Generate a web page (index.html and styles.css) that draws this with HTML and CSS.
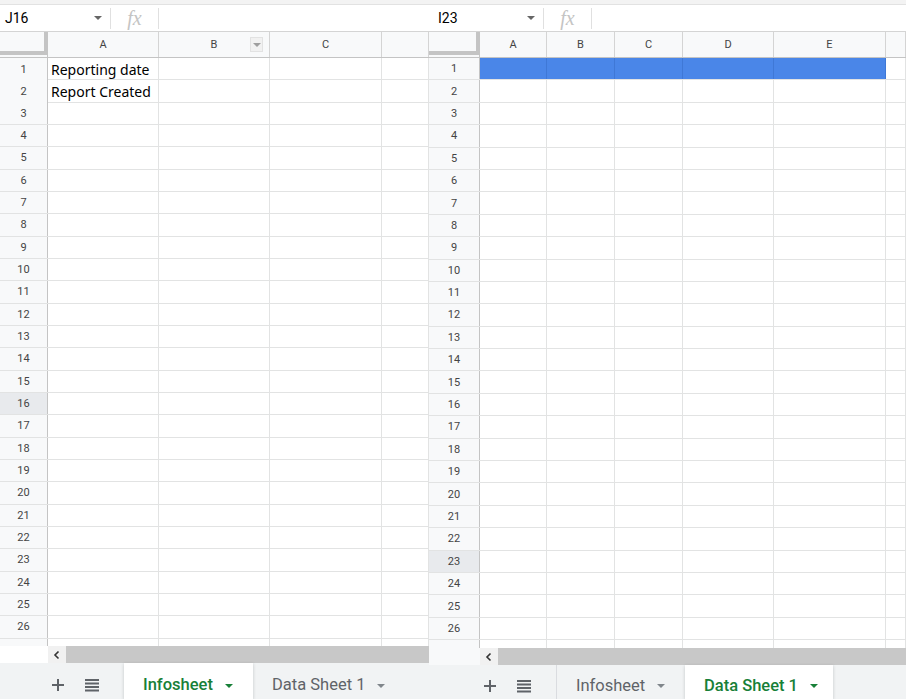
FILE: index.html
```html
<!DOCTYPE html>
<html lang="en">
<head>
  <meta charset="UTF-8" />
  <title>Sheets</title>
  <link rel="stylesheet" href="styles.css">
</head>
<body>

  <!-- Left sheet -->
  <div class="panel left">
    <div class="top-strip"></div>
    <div class="formula-bar">
      <div class="name-box">J16 <span class="caret"></span></div>
      <div class="fx">fx</div>
      <div class="formula-input"></div>
    </div>
    <div class="grid" id="grid-left">
      <div class="row head">
        <div class="corner"><span></span></div>
        <div class="col-head">A</div>
        <div class="col-head">B <span class="filter-btn"><span class="caret"></span></span></div>
        <div class="col-head">C</div>
        <div class="col-head"></div>
      </div>
    </div>
    <div class="hscroll">
      <div class="hscroll-pad"></div>
      <div class="hscroll-btn">
        <svg width="10" height="10" viewBox="0 0 10 10"><path d="M6.5 1.5 L3 5 L6.5 8.5" fill="none" stroke="#333" stroke-width="1.6"/></svg>
      </div>
      <div class="hscroll-track"></div>
    </div>
    <div class="tab-bar">
      <div class="tab-icon">
        <svg width="14" height="14" viewBox="0 0 14 14"><path d="M7 1v12M1 7h12" stroke="#5f6368" stroke-width="2"/></svg>
      </div>
      <div class="tab-icon">
        <svg width="14" height="14" viewBox="0 0 14 14"><path d="M0 2h14M0 5.5h14M0 9h14M0 12.5h14" stroke="#5f6368" stroke-width="1.8"/></svg>
      </div>
      <div class="tab short active">Infosheet <span class="caret"></span></div>
      <div class="tab long">Data Sheet 1 <span class="caret"></span></div>
    </div>
  </div>

  <!-- Right sheet -->
  <div class="panel right">
    <div class="top-strip"></div>
    <div class="formula-bar">
      <div class="name-box">I23 <span class="caret"></span></div>
      <div class="fx">fx</div>
      <div class="formula-input"></div>
    </div>
    <div class="grid" id="grid-right">
      <div class="row head">
        <div class="corner"><span></span></div>
        <div class="col-head">A</div>
        <div class="col-head">B</div>
        <div class="col-head">C</div>
        <div class="col-head">D</div>
        <div class="col-head">E</div>
        <div class="col-head"></div>
      </div>
    </div>
    <div class="hscroll">
      <div class="hscroll-pad"></div>
      <div class="hscroll-btn">
        <svg width="10" height="10" viewBox="0 0 10 10"><path d="M6.5 1.5 L3 5 L6.5 8.5" fill="none" stroke="#333" stroke-width="1.6"/></svg>
      </div>
      <div class="hscroll-track"></div>
    </div>
    <div class="tab-bar">
      <div class="tab-icon">
        <svg width="14" height="14" viewBox="0 0 14 14"><path d="M7 1v12M1 7h12" stroke="#5f6368" stroke-width="2"/></svg>
      </div>
      <div class="tab-icon">
        <svg width="14" height="14" viewBox="0 0 14 14"><path d="M0 2h14M0 5.5h14M0 9h14M0 12.5h14" stroke="#5f6368" stroke-width="1.8"/></svg>
      </div>
      <div class="tab short">Infosheet <span class="caret"></span></div>
      <div class="tab long active">Data Sheet 1 <span class="caret"></span></div>
    </div>
  </div>

  <script>
    // 26 numbered rows plus one partly hidden blank row under them
    function buildRows(grid, cols, opts) {
      for (let r = 1; r <= 27; r++) {
        const row = document.createElement('div');
        row.className = 'row';

        const num = document.createElement('div');
        num.className = 'row-head';
        if (r === opts.current) num.classList.add('current');
        if (r <= 26) num.textContent = r;
        row.appendChild(num);

        for (let c = 0; c < cols; c++) {
          const cell = document.createElement('div');
          cell.className = 'cell';
          if (opts.text[r] && c === 0) cell.textContent = opts.text[r];
          if (r === opts.selectedRow && c < cols - 1) cell.classList.add('selected');
          row.appendChild(cell);
        }
        grid.appendChild(row);
      }
    }

    buildRows(document.getElementById('grid-left'), 4, {
      current: 16,
      text: { 1: 'Reporting date', 2: 'Report Created' },
    });

    buildRows(document.getElementById('grid-right'), 6, {
      current: 23,
      selectedRow: 1,
      text: {},
    });
  </script>
</body>
</html>
```

FILE: styles.css
```css
body {
  margin: 0;
  display: flex;
  font-family: Roboto, Arial, sans-serif;
  background-color: #fff;
  height: 699px;
  overflow: hidden;
}

.panel {
  display: flex;
  flex-direction: column;
  height: 699px;
  overflow: hidden;
}

.panel.left {
  width: 429px;
}

.panel.right {
  width: 477px;
}

.top-strip {
  height: 4px;
  background-color: #f3f3f3;
  border-bottom: 1px solid #e2e2e2;
}

/* formula bar */
.formula-bar {
  display: flex;
  align-items: center;
  height: 26px;
  flex-shrink: 0;
}

.name-box {
  display: flex;
  align-items: center;
  justify-content: space-between;
  padding: 0 8px 0 5px;
  font-size: 14px;
  color: #000;
  box-sizing: border-box;
}

.left .name-box {
  width: 110px;
}

.right .name-box {
  width: 114px;
  padding-left: 9px;
  padding-right: 8px;
}

.fx {
  width: 49px;
  height: 21px;
  line-height: 20px;
  border-left: 1px solid #e0e0e0;
  border-right: 1px solid #e0e0e0;
  font-family: "Liberation Serif", serif;
  font-style: italic;
  font-size: 20px;
  color: #c4c4c4;
  text-align: center;
  box-sizing: border-box;
}

.formula-input {
  flex: 1;
}

.caret {
  display: inline-block;
  width: 0;
  height: 0;
  border-left: 4px solid transparent;
  border-right: 4px solid transparent;
  border-top: 4px solid #666;
}

/* grid */
.grid {
  flex: 1;
  overflow: hidden;
  border-top: 1px solid #d4d4d4;
}

.row {
  display: grid;
  box-sizing: border-box;
  border-bottom: 1px solid #e2e3e3;
}

.left .row {
  grid-template-columns: 48px 111px 111px 112px 1fr;
  height: 22.33px;
}

.right .row {
  grid-template-columns: 51px 67px 68px 68px 91px 112px 1fr;
  height: 22.4px;
}

.row.head {
  height: 26px;
  background-color: #f8f9fa;
  border-bottom: 1px solid #c4c4c4;
}

.corner {
  border-right: 1px solid #c4c4c4;
}

.corner span {
  display: block;
  height: 19px;
  border-right: 4px solid #c4c4c4;
  border-bottom: 4px solid #c4c4c4;
  margin-right: -1px;
}

.col-head {
  position: relative;
  display: flex;
  align-items: center;
  justify-content: center;
  font-size: 11px;
  color: #444;
  border-right: 1px solid #d4d4d4;
}

.filter-btn {
  position: absolute;
  right: 6px;
  top: 5px;
  width: 11px;
  height: 13px;
  border: 1px solid #e2e2e2;
  background-color: #f1f1f1;
  display: flex;
  align-items: center;
  justify-content: center;
}

.filter-btn .caret {
  border-top: 4px solid #9e9e9e;
}

.row-head {
  display: flex;
  align-items: center;
  justify-content: center;
  font-size: 11px;
  color: #444;
  background-color: #f8f9fa;
  border-right: 1px solid #c4c4c4;
}

.row-head.current {
  background-color: #e8eaed;
}

.cell {
  border-right: 1px solid #e2e3e3;
  font-family: "Noto Sans", Arial, sans-serif;
  font-size: 14px;
  color: #000;
  padding-left: 3px;
  line-height: 23px;
  white-space: nowrap;
}

.cell.selected {
  background-color: #4a86e8;
  border-right-color: #3f78d6;
}

/* horizontal scroll */
.hscroll {
  display: flex;
  height: 17px;
  flex-shrink: 0;
}

.hscroll-pad {
  background-color: #fff;
}

.left .hscroll-pad {
  width: 48px;
}

.right .hscroll-pad {
  width: 51px;
  background-color: #f8f9fa;
}

.hscroll-btn {
  width: 18px;
  background-color: #f1f1f1;
  display: flex;
  align-items: center;
  justify-content: center;
}

.hscroll-track {
  flex: 1;
  background-color: #c8c8c8;
}

/* sheet tabs */
.tab-bar {
  display: flex;
  align-items: stretch;
  background-color: #f1f3f4;
  flex-shrink: 0;
}

.left .tab-bar {
  height: 36px;
  padding-left: 41px;
}

.right .tab-bar {
  height: 34px;
  padding-left: 44px;
}

.tab-icon {
  width: 34px;
  padding-top: 7px;
  display: flex;
  align-items: center;
  justify-content: center;
}

.tab-icon + .tab-icon {
  margin-right: 15px;
}

.tab {
  flex-shrink: 0;
  box-sizing: border-box;
  display: flex;
  align-items: center;
  gap: 12px;
  padding: 7px 19px 0;
  font-size: 16.5px;
  color: #5f6368;
  white-space: nowrap;
  border-left: 1px solid #dadce0;
}

.right .tab {
  padding-top: 6px;
}

.tab.short {
  width: 129px;
}

.tab.long {
  width: 148px;
}

.tab .caret {
  border-top-color: #80868b;
  margin-top: 2px;
}

.tab.active {
  background-color: #fff;
  color: #188038;
  font-weight: 500;
  border-left: none;
  box-shadow: 0 1px 3px rgba(60, 64, 67, 0.25);
}

.tab.active .caret {
  border-top-color: #188038;
}

.tab.active + .tab {
  border-left: none;
}
```
